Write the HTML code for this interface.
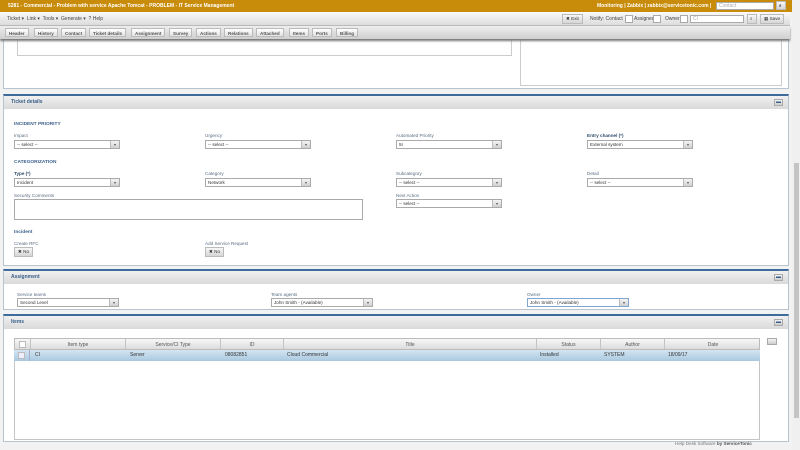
<!DOCTYPE html>
<html><head><meta charset="utf-8"><style>
*{box-sizing:border-box;margin:0;padding:0}
body{width:800px;height:450px;overflow:hidden;background:#f2f2f2;font-family:"Liberation Sans",sans-serif;font-size:5px;color:#444;position:relative}
.a{position:absolute}
.top{left:0;top:0;width:792px;height:12px;background:#c88c0a;color:#fff;font-weight:bold;font-size:5px;line-height:12px}
.tb{left:0;top:12px;width:790px;height:14px;background:linear-gradient(#fafafa,#dcdcdc);border-bottom:1px solid #bbb;line-height:14px}
.tabs{left:0;top:26px;width:790px;height:13px;background:linear-gradient(#eee,#cfcfcf);box-shadow:0 2px 2px #777}
.tab{position:absolute;top:2px;height:9px;line-height:9px;border:1px solid #bbb;background:linear-gradient(#fff,#e2e2e2);padding:0 3px;font-weight:bold;color:#555;font-size:4.6px}
.panel{background:#fff;border:1px solid #b7c3cf;border-top:2px solid #3d6b9c}
.hdr{position:absolute;left:0;right:0;top:0;height:13px;background:linear-gradient(#f1f1f1,#d9d9d9);color:#3a5f8a;font-weight:bold;line-height:13px;padding-left:7px;font-size:5px}
.min{position:absolute;right:5px;top:3px;width:9px;height:7px;background:linear-gradient(#f4f4f4,#ccc);border:1px solid #aaa;font-size:5px;line-height:5px;text-align:center}
.lbl{position:absolute;color:#5a6e84;font-size:4.6px}
.b{font-weight:bold;color:#2f4c6b}
.sec{position:absolute;font-weight:bold;color:#3a5f8a;font-size:4.8px}
.sel{position:absolute;height:9px;border:1px solid #aaa;background:#fff;font-size:4.6px;line-height:7px;padding-left:2px;color:#333}
.sel:after{content:"▾";position:absolute;right:0;top:0;width:8px;height:7px;background:linear-gradient(#f4f4f4,#d0d0d0);border-left:1px solid #bbb;text-align:center;font-size:4px;line-height:7px;color:#555}
.btn{position:absolute;height:10px;border:1px solid #bbb;background:linear-gradient(#f7f7f7,#d6d6d6);font-size:4.6px;line-height:8px;padding:0 3px;color:#333}
.inp{position:absolute;background:#fff;border:1px solid #aaa;height:8px}
.cell{position:absolute;top:0;height:100%;border-right:1px solid #c4c4c4;text-align:center;line-height:inherit}
</style></head><body>
<div class="a top"><span style="position:absolute;left:8px">5281 - Commercial - Problem with service Apache Tomcat - PROBLEM - IT Service Management</span>
<span style="position:absolute;left:597px">Monitoring | Zabbix | zabbix@servicetonic.com |</span>
<div class="inp" style="left:716px;top:2px;width:58px;color:#aaa;padding-left:2px;line-height:6px;font-weight:normal">Contact</div>
<div class="btn" style="left:776px;top:1px;width:10px;height:9px;line-height:7px;padding:0 2px">⌕</div></div>
<div class="a tb"><span style="position:absolute;left:7px">Ticket ▾ &nbsp;Link ▾ &nbsp;Tools ▾ &nbsp;Generate ▾ &nbsp;? Help</span>
<div class="btn" style="left:562px;top:2px">✖ Exit</div>
<span style="position:absolute;left:590px">Notify: Contact</span><div class="inp" style="left:625px;top:3px;width:8px"></div>
<span style="position:absolute;left:634px">Assigned</span><div class="inp" style="left:653px;top:3px;width:8px"></div>
<span style="position:absolute;left:665px">Owner</span><div class="inp" style="left:680px;top:3px;width:8px"></div>
<div class="inp" style="left:690px;top:3px;width:54px;color:#aaa;padding-left:2px;line-height:6px">CI</div>
<div class="btn" style="left:747px;top:2px;width:10px;padding:0 2px">⌕</div>
<div class="btn" style="left:760px;top:2px">▦ Save</div></div>
<div class="a tabs">
<div class="tab" style="left:5px">Header</div><div class="tab" style="left:34px">History</div><div class="tab" style="left:61px">Contact</div><div class="tab" style="left:89px">Ticket details</div><div class="tab" style="left:131px">Assignment</div><div class="tab" style="left:169px">Survey</div><div class="tab" style="left:196px">Actions</div><div class="tab" style="left:224px">Relations</div><div class="tab" style="left:256px">Attached</div><div class="tab" style="left:289px">Items</div><div class="tab" style="left:312px">Ports</div><div class="tab" style="left:336px">Billing</div></div>
<div class="a" style="left:3px;top:39px;width:786px;height:50px;background:#fff;border:1px solid #b7c3cf;border-top:none;z-index:-1"></div>
<div class="a" style="left:17px;top:39px;width:495px;height:17px;border:1px solid #ccc;border-top:none;z-index:-1"></div>
<div class="a" style="left:520px;top:39px;width:262px;height:47px;border:1px solid #ccc;border-top:none;z-index:-1"></div>

<div class="a panel" style="left:3px;top:94px;width:786px;height:172px">
<div class="hdr">Ticket details<div class="min">▬</div></div>
<div class="sec" style="left:10px;top:26px">INCIDENT PRIORITY</div>
<div class="lbl" style="left:10px;top:37px">Impact</div><div class="sel" style="left:10px;top:44px;width:106px">-- select --</div>
<div class="lbl" style="left:201px;top:37px">Urgency</div><div class="sel" style="left:201px;top:44px;width:106px">-- select --</div>
<div class="lbl" style="left:392px;top:37px">Automated Priority</div><div class="sel" style="left:392px;top:44px;width:106px">5I</div>
<div class="lbl b" style="left:583px;top:37px">Entry channel (*)</div><div class="sel" style="left:583px;top:44px;width:106px">External system</div>
<div class="sec" style="left:10px;top:64px">CATEGORIZATION</div>
<div class="lbl b" style="left:10px;top:75px">Type (*)</div><div class="sel" style="left:10px;top:82px;width:106px">Incident</div>
<div class="lbl" style="left:201px;top:75px">Category</div><div class="sel" style="left:201px;top:82px;width:106px">Network</div>
<div class="lbl" style="left:392px;top:75px">Subcategory</div><div class="sel" style="left:392px;top:82px;width:106px">-- select --</div>
<div class="lbl" style="left:583px;top:75px">Detail</div><div class="sel" style="left:583px;top:82px;width:106px">-- select --</div>
<div class="lbl" style="left:10px;top:97px">Security Comments</div><div class="a" style="left:10px;top:103px;width:349px;height:21px;border:1px solid #aaa"></div>
<div class="lbl" style="left:392px;top:97px">Next Action</div><div class="sel" style="left:392px;top:103px;width:106px">-- select --</div>
<div class="sec" style="left:10px;top:134px">Incident</div>
<div class="lbl" style="left:10px;top:145px">Create RFC</div><div class="btn" style="left:10px;top:151px">✖ No</div>
<div class="lbl" style="left:201px;top:145px">Add Service Request</div><div class="btn" style="left:201px;top:151px">✖ No</div>
</div>

<div class="a panel" style="left:3px;top:269px;width:786px;height:41px">
<div class="hdr">Assignment<div class="min">▬</div></div>
<div class="lbl" style="left:13px;top:21px">Service teams</div><div class="sel" style="left:13px;top:27px;width:102px">Second Level</div>
<div class="lbl" style="left:267px;top:21px">Team agents</div><div class="sel" style="left:267px;top:27px;width:102px">John Smith - (Available)</div>
<div class="lbl" style="left:523px;top:21px">Owner</div><div class="sel" style="left:523px;top:27px;width:102px;border-color:#7fa7d0">John Smith - (Available)</div>
</div>

<div class="a panel" style="left:3px;top:314px;width:786px;height:128px">
<div class="hdr">Items<div class="min">▬</div></div>
<div class="min" style="right:11px;top:22px;width:10px;height:7px"></div>
<div class="a" style="left:10px;top:22px;width:746px;height:102px;border:1px solid #c4c4c4"></div>
<div class="a" style="left:10px;top:22px;width:746px;height:12px;line-height:12px;background:linear-gradient(#f7f7f7,#dcdcdc);border:1px solid #bbb;color:#555">
<div class="cell" style="left:0;width:16px"><div style="margin:2px 4px;width:7px;height:7px;border:1px solid #bbb;background:#fff"></div></div>
<div class="cell" style="left:16px;width:95px">Item type</div><div class="cell" style="left:111px;width:95px">Service/CI Type</div><div class="cell" style="left:206px;width:63px">ID</div><div class="cell" style="left:269px;width:253px">Title</div><div class="cell" style="left:522px;width:64px">Status</div><div class="cell" style="left:586px;width:64px">Author</div><div class="cell" style="left:650px;width:96px;border:none">Date</div></div>
<div class="a" style="left:10px;top:34px;width:746px;height:11px;line-height:11px;background:linear-gradient(#d4e5f2,#a9c9e0);color:#333">
<div class="cell" style="left:0;width:16px;border-color:#aac"><div style="margin:2px 4px;width:7px;height:7px;border:1px solid #bbb;background:#eef"></div></div>
<span class="a" style="left:21px">CI</span><span class="a" style="left:116px">Server</span><span class="a" style="left:211px">08082851</span><span class="a" style="left:273px">Cloud Commercial</span><span class="a" style="left:526px">Installed</span><span class="a" style="left:590px">SYSTEM</span><span class="a" style="left:654px">18/09/17</span></div>
</div>
<div class="a" style="left:675px;top:441px;font-size:4.6px;color:#777">Help Desk Software <b style="color:#555">by ServiceTonic</b></div>
<div class="a" style="left:792px;top:0;width:8px;height:450px;background:#f0f0f0"></div>
<div class="a" style="left:794px;top:163px;width:5px;height:255px;background:#c4c4c4"></div>
</body></html>
